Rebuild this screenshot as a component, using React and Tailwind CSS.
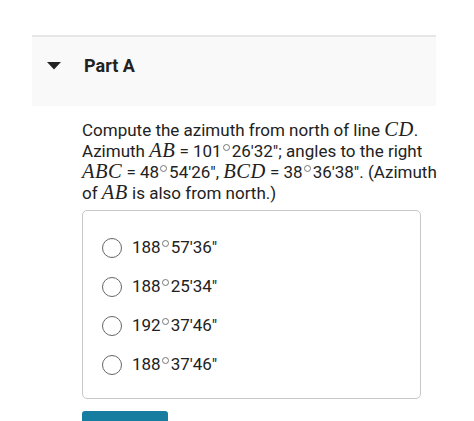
import React, { useState } from 'react';

const Deg = () => (
  <span className="relative -top-[6px] ml-[1px] mr-[2px] inline-block h-[7px] w-[7px] rounded-full border border-[#777]" />
);

const M = ({ children }) => (
  <span className="text-[20.5px] leading-[20px] italic tracking-[0.5px]" style={{ fontFamily: '"Liberation Serif", "DejaVu Serif", serif' }}>
    {children}
  </span>
);

const options = [
  ['188', "57'36\""],
  ['188', "25'34\""],
  ['192', "37'46\""],
  ['188', "37'46\""],
];

const App = () => {
  const [picked, setPicked] = useState(null);

  return (
    <div className="h-[421px] w-[474px] overflow-hidden bg-white pt-[35px] text-[#222]" style={{ fontFamily: 'Roboto, "Liberation Sans", sans-serif' }}>
      {/* part header */}
      <div className="ml-[32px] flex h-[71px] w-[404px] items-center border-t-2 border-[#e6e6e6] bg-[#f9f9f9] pb-[12px]">
        <svg width="14" height="8" viewBox="0 0 14 8" className="ml-[15px]">
          <path d="M0 0 L14 0 L7 7.5 Z" fill="#222" />
        </svg>
        <span className="ml-[23px] text-[18px] font-bold">Part A</span>
      </div>

      <div className="ml-[82px] w-[380px]">
        <p className="mt-[13px] whitespace-nowrap text-[17px] leading-[20px]">
          Compute the azimuth from north of line <M>CD</M>.<br />
          Azimuth <M>AB</M> = 101<Deg />26'32"; angles to the right<br />
          <M>ABC</M> = 48<Deg />54'26", <M>BCD</M> = 38<Deg />36'38". (Azimuth<br />
          of <M>AB</M> is also from north.)
        </p>

        <div className="mt-[7px] w-[339px] rounded-[5px] border border-[#c8c8c8] pb-[14px] pt-[17px]">
          {options.map(([a, b], i) => (
            <label key={i} className="flex h-[39px] cursor-pointer items-center pl-[19px]">
              <span className="flex h-[20px] w-[20px] items-center justify-center rounded-full border-[1.5px] border-[#666]">
                {picked === i && <span className="h-[10px] w-[10px] rounded-full bg-[#222]" />}
              </span>
              <input type="radio" name="ans" className="hidden" onChange={() => setPicked(i)} />
              <span className="ml-[10px] text-[17px]">
                {a}
                <Deg />
                {b}
              </span>
            </label>
          ))}
        </div>

        <button type="button" className="mt-[12px] h-[36px] w-[86px] rounded-t-[3px] bg-[#167ca0] text-[16px] text-white">
          Submit
        </button>
      </div>
    </div>
  );
};

export default App;
